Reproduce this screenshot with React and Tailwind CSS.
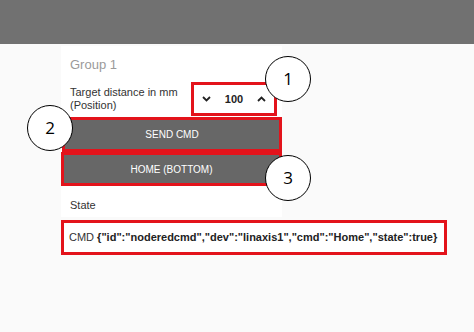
import React from "react";

function Chevron({ up }) {
  return (
    <svg width="9" height="6" viewBox="0 0 9 6" className="block">
      <path
        d={up ? "M1 5 L4.5 1.5 L8 5" : "M1 1 L4.5 4.5 L8 1"}
        fill="none"
        stroke="#222"
        strokeWidth="1.8"
      />
    </svg>
  );
}

function Marker({ n, className }) {
  return (
    <div
      className={
        "absolute w-[46px] h-[46px] rounded-full border border-black bg-white flex items-center justify-center text-[17px] text-black font-['Open_Sans',sans-serif] " +
        className
      }
    >
      {n}
    </div>
  );
}

export default function App() {
  return (
    <div className="relative min-h-[332px] w-[474px] bg-[#fafafa] font-['Liberation_Sans',Arial,sans-serif] overflow-hidden">
      <div className="h-[44px] bg-[#717171]" />
      <div className="pl-[61px] pt-[2px]">
        <div className="w-[221px] bg-white pb-[5px]">
          <div className="pl-[9px] pt-[11px] text-[13px] leading-[16px] text-[#9a9a9a]">
            Group 1
          </div>
          <div className="flex items-center pl-[9px] mt-[9px]">
            <div className="w-[121px] text-[11px] leading-[13px] text-[#333]">
              Target distance in mm
              <br />
              (Position)
            </div>
            <div className="w-[86px] h-[34px] border-[3px] border-[#e3131b] flex items-center justify-between px-[8px]">
              <Chevron />
              <span className="text-[11px] font-bold text-[#222]">100</span>
              <Chevron up />
            </div>
          </div>
          <div className="ml-[1px] w-[220px] h-[35px] border-[3px] border-[#e3131b] mt-[1px]">
            <div className="h-full bg-[#676767] flex items-center justify-center text-[10px] text-white">
              SEND CMD
            </div>
          </div>
          <div className="ml-[0px] w-[221px] h-[34px] border-[3px] border-[#e3131b]">
            <div className="h-full bg-[#676767] flex items-center justify-center text-[10px] text-white">
              HOME (BOTTOM)
            </div>
          </div>
          <div className="pl-[9px] mt-[12px] text-[11px] leading-[14px] text-[#333]">
            State
          </div>
        </div>
        <div className="w-[386px] h-[35px] mt-[3px] border-[3px] border-[#e3131b] bg-white flex items-center pl-[5px] text-[11px] text-[#222] whitespace-nowrap">
          <span className="text-[#333]">CMD&nbsp;</span>
          <span className="font-bold">
            {'{"id":"noderedcmd","dev":"linaxis1","cmd":"Home","state":true}'}
          </span>
        </div>
      </div>
      <Marker n="1" className="left-[265px] top-[56px]" />
      <Marker n="2" className="left-[27px] top-[105px]" />
      <Marker n="3" className="left-[265px] top-[155px]" />
    </div>
  );
}
